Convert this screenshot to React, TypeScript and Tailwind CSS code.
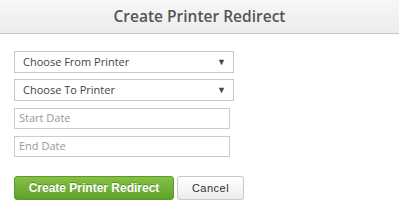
export default function App() {
  return (
    <div className="w-[399px] h-[216px] bg-white overflow-hidden relative" style={{ fontFamily: '"Open Sans", sans-serif' }}>
      <div className="h-[34px] flex items-center justify-center border-b border-[#c8c8c8] bg-gradient-to-b from-[#f7f7f7] to-[#ececec]">
        <h1 className="text-[15.5px] font-semibold text-[#555]">Create Printer Redirect</h1>
      </div>
      <div className="flex flex-col pl-[14px] pt-[17px]">
        <div className="w-[220px] h-[22px] border border-[#c8c8c8] flex items-center justify-between pl-[8px] pr-[7px] text-[11px] text-[#444]">
          <span>Choose From Printer</span>
          <span className="text-[9px] text-[#444]">▼</span>
        </div>
        <div className="mt-[6px] w-[220px] h-[22px] border border-[#c8c8c8] flex items-center justify-between pl-[8px] pr-[7px] text-[11px] text-[#444]">
          <span>Choose To Printer</span>
          <span className="text-[9px] text-[#444]">▼</span>
        </div>
        <div className="mt-[7px] w-[216px] h-[21px] border border-[#ccc] flex items-center pl-[4px] text-[11px] text-[#999]">
          Start Date
        </div>
        <div className="mt-[7px] w-[216px] h-[21px] border border-[#ccc] flex items-center pl-[4px] text-[11px] text-[#999]">
          End Date
        </div>
        <div className="mt-[19px] flex gap-[3px]" style={{ fontFamily: '"Liberation Sans", Arial, sans-serif' }}>
          <button className="w-[160px] h-[24px] rounded-[3px] border border-[#5a9a2a] bg-gradient-to-b from-[#86c044] to-[#5fa22a] text-white text-[12px] font-bold [text-shadow:0_-1px_0_rgba(0,0,0,0.25)]">
            Create Printer Redirect
          </button>
          <button className="w-[67px] h-[24px] rounded-[3px] border border-[#c8c8c8] bg-gradient-to-b from-[#fff] to-[#ececec] text-[#333] text-[11px] tracking-[0.5px]">
            Cancel
          </button>
        </div>
      </div>
    </div>
  );
}
